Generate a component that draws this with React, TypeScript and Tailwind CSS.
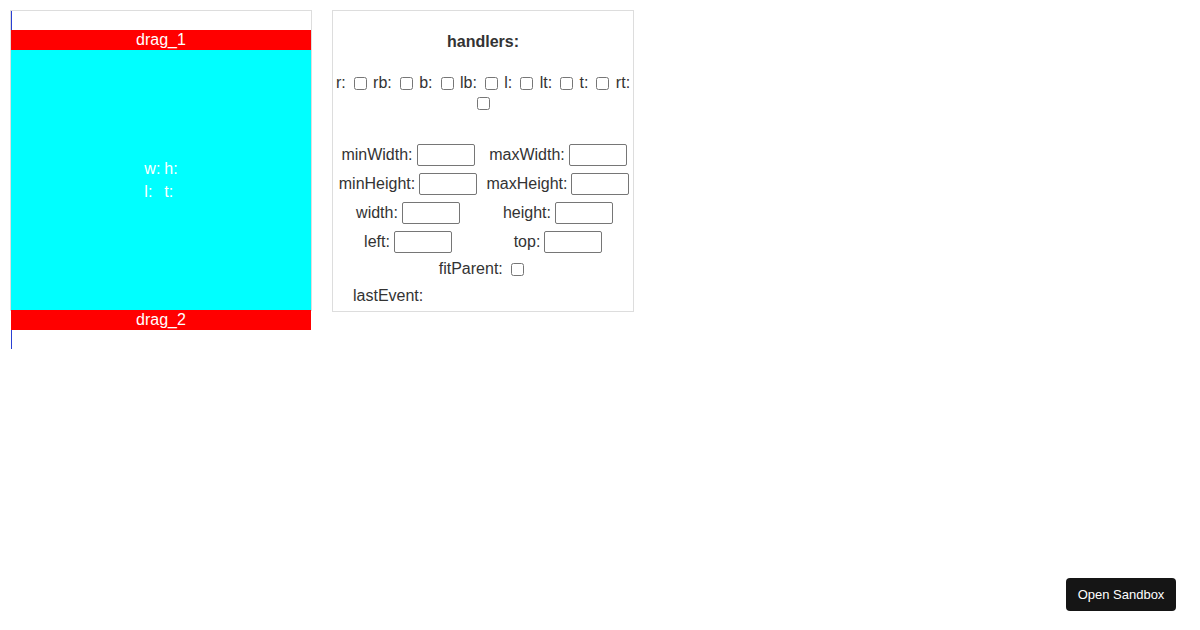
import React from "react";

const handlers = ["r", "rb", "b", "lb", "l", "lt", "t", "rt"];

function NumberField({ label }: { label: string }) {
  return (
    <div className="flex items-center justify-center h-[22px]">
      <span>{label}:</span>
      <input
        type="text"
        className="ml-[4px] w-[58px] h-[22px] border border-[#767676] rounded-[2px] bg-white px-[2px] text-[13px]"
      />
    </div>
  );
}

export default function App() {
  return (
    <div
      className="min-h-[630px] bg-white p-[10px] text-[16px] text-[#333]"
      style={{ fontFamily: '"Liberation Sans", Arial, sans-serif' }}
    >
      <div className="flex items-start gap-[20px]">
        {/* resizable playground */}
        <div className="w-[302px] h-[301px] border border-[#ddd] border-b-0">
          <div className="border-l border-[#2a40d4] py-[19px]">
            <div className="-ml-px w-[300px] h-[20px] bg-[#ff0000] text-white text-center leading-[20px]">
              drag_1
            </div>
            <div className="-ml-px w-[300px] h-[260px] bg-[#00ffff] text-white flex items-center justify-center">
              <div className="grid grid-cols-[auto_auto] gap-x-[4px] leading-[23px] text-left">
                <span>w:</span>
                <span>h:</span>
                <span>l:</span>
                <span>t:</span>
              </div>
            </div>
            <div className="-ml-px w-[300px] h-[20px] bg-[#ff0000] text-white text-center leading-[20px]">
              drag_2
            </div>
          </div>
        </div>

        {/* controls */}
        <div className="w-[302px] h-[302px] border border-[#ddd]">
          <div className="pt-[22px] text-center font-bold leading-[18px]">handlers:</div>

          <div className="mt-[22px] text-center leading-[19px]">
            {handlers.map((h) => (
              <React.Fragment key={h}>
                {h}:{" "}
                <input type="checkbox" className="ml-[3.5px] mr-[2px] my-[3px] align-[-2px]" />{" "}
              </React.Fragment>
            ))}
          </div>

          <div className="mt-[31px] grid grid-cols-2 gap-y-[7px]">
            <NumberField label="minWidth" />
            <NumberField label="maxWidth" />
            <NumberField label="minHeight" />
            <NumberField label="maxHeight" />
            <NumberField label="width" />
            <NumberField label="height" />
            <NumberField label="left" />
            <NumberField label="top" />
          </div>

          <div className="mt-[6px] text-center leading-[19px]">
            fitParent:{" "}
            <input type="checkbox" className="ml-[4px] mr-[3px] my-[3px] align-[-2px]" />
          </div>

          <div className="mt-[7px] pl-[20px] leading-[19px]">lastEvent:</div>
        </div>
      </div>

      <button className="fixed right-[24px] bottom-[19px] w-[110px] h-[33px] rounded-[4px] bg-[#151515] text-white text-[13px]">
        Open Sandbox
      </button>
    </div>
  );
}
